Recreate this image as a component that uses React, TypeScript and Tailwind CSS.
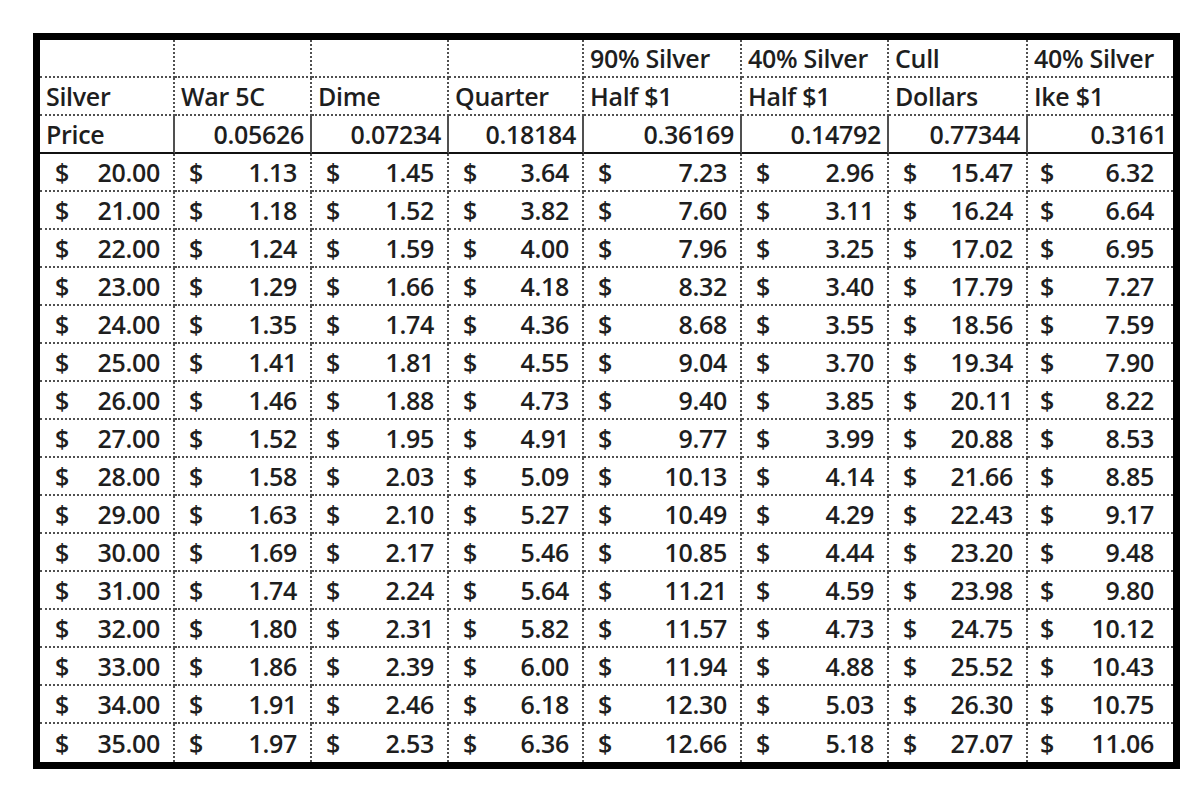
const COLS = [135, 137, 137, 135, 158, 147, 139, 145];

const TOP = ["", "", "", "", "90% Silver", "40% Silver", "Cull", "40% Silver"];
const NAMES = ["Silver", "War 5C", "Dime", "Quarter", "Half $1", "Half $1", "Dollars", "Ike $1"];
const FACTORS = ["0.05626", "0.07234", "0.18184", "0.36169", "0.14792", "0.77344", "0.3161"];

// silver price, then value per coin type
const ROWS: string[][] = [
  ["20.00", "1.13", "1.45", "3.64", "7.23", "2.96", "15.47", "6.32"],
  ["21.00", "1.18", "1.52", "3.82", "7.60", "3.11", "16.24", "6.64"],
  ["22.00", "1.24", "1.59", "4.00", "7.96", "3.25", "17.02", "6.95"],
  ["23.00", "1.29", "1.66", "4.18", "8.32", "3.40", "17.79", "7.27"],
  ["24.00", "1.35", "1.74", "4.36", "8.68", "3.55", "18.56", "7.59"],
  ["25.00", "1.41", "1.81", "4.55", "9.04", "3.70", "19.34", "7.90"],
  ["26.00", "1.46", "1.88", "4.73", "9.40", "3.85", "20.11", "8.22"],
  ["27.00", "1.52", "1.95", "4.91", "9.77", "3.99", "20.88", "8.53"],
  ["28.00", "1.58", "2.03", "5.09", "10.13", "4.14", "21.66", "8.85"],
  ["29.00", "1.63", "2.10", "5.27", "10.49", "4.29", "22.43", "9.17"],
  ["30.00", "1.69", "2.17", "5.46", "10.85", "4.44", "23.20", "9.48"],
  ["31.00", "1.74", "2.24", "5.64", "11.21", "4.59", "23.98", "9.80"],
  ["32.00", "1.80", "2.31", "5.82", "11.57", "4.73", "24.75", "10.12"],
  ["33.00", "1.86", "2.39", "6.00", "11.94", "4.88", "25.52", "10.43"],
  ["34.00", "1.91", "2.46", "6.18", "12.30", "5.03", "26.30", "10.75"],
  ["35.00", "1.97", "2.53", "6.36", "12.66", "5.18", "27.07", "11.06"],
];

function Cell({
  col,
  bottom = "dotted",
  className = "",
  children,
}: {
  col: number;
  bottom?: "dotted" | "solid" | "none";
  className?: string;
  children?: React.ReactNode;
}) {
  const right = col < COLS.length - 1 ? "border-r-2 border-dotted border-r-[#505050]" : "";
  const b =
    bottom === "solid"
      ? "border-b-2 border-solid border-b-[#111]"
      : bottom === "dotted"
        ? "border-b-2 border-dotted border-b-[#505050]"
        : "";
  return (
    <div className={`flex h-[38px] items-center whitespace-nowrap ${right} ${b} ${className}`}>
      {children}
    </div>
  );
}

export default function App() {
  return (
    <div className="h-[786px] w-[1200px] overflow-hidden bg-white pl-[33px] pt-[33px]">
      <div
        className="w-fit border-[7px] border-black bg-white text-[25px] font-semibold leading-none tracking-[-0.3px] text-[#1e1e1e]"
        style={{ fontFamily: '"Open Sans", "Liberation Sans", sans-serif' }}
      >
        <div className="grid grid-cols-[135px_137px_137px_135px_158px_147px_139px_145px]">
          {TOP.map((t, i) => (
            <Cell key={`t${i}`} col={i} className="pl-[6px]">
              {t}
            </Cell>
          ))}
          {NAMES.map((t, i) => (
            <Cell key={`n${i}`} col={i} className="pl-[6px]">
              {t}
            </Cell>
          ))}
          <Cell col={0} bottom="solid" className="pl-[6px]">
            Price
          </Cell>
          {FACTORS.map((f, i) => (
            <Cell key={`f${i}`} col={i + 1} bottom="solid" className="justify-end pr-[6px]">
              {f}
            </Cell>
          ))}
          {ROWS.map((row, r) =>
            row.map((v, c) => (
              <Cell
                key={`${r}-${c}`}
                col={c}
                bottom={r === ROWS.length - 1 ? "none" : "dotted"}
                className={`justify-between ${c === 0 ? "pl-[15px] pr-[13px]" : c === 7 ? "pl-[12px] pr-[19px]" : "pl-[14px] pr-[13px]"}`}
              >
                <span>$</span>
                <span>{v}</span>
              </Cell>
            )),
          )}
        </div>
      </div>
    </div>
  );
}
